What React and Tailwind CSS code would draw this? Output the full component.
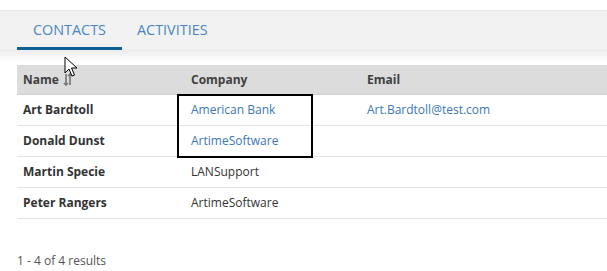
import React from "react";

const rows = [
  { name: "Art Bardtoll", company: "American Bank", email: "Art.Bardtoll@test.com", link: true },
  { name: "Donald Dunst", company: "ArtimeSoftware", email: "", link: true },
  { name: "Martin Specie", company: "LANSupport", email: "", link: false },
  { name: "Peter Rangers", company: "ArtimeSoftware", email: "", link: false },
];

function Cursor() {
  return (
    <svg
      className="absolute left-[64px] top-[56px]"
      width="14"
      height="22"
      viewBox="0 0 14 22"
    >
      <path
        d="M1 1 L1 17 L5 13 L8 20 L10.5 19 L7.5 12 L13 12 Z"
        fill="#ffffff"
        stroke="#000000"
        strokeWidth="1"
        strokeLinejoin="round"
      />
    </svg>
  );
}

function SortIcon() {
  return (
    <svg width="10" height="13" viewBox="0 0 10 13" className="ml-[4px]">
      <path d="M3 1 V12 M1 10 L3 12 L5 10" stroke="#7a7a7a" strokeWidth="1.7" fill="none" />
      <path d="M7 12 V1 M5 3 L7 1 L9 3" stroke="#7a7a7a" strokeWidth="1.7" fill="none" />
    </svg>
  );
}

export default function App() {
  return (
    <div
      className="relative w-[607px] h-[271px] bg-white overflow-hidden"
      style={{ fontFamily: '"Open Sans", "Noto Sans", sans-serif' }}
    >
      {/* tab bar */}
      <div className="pt-[10px]">
        <div className="h-[39px] bg-[#f2f2f2] border-t border-[#e8e8e8] flex pl-[17px]">
          <div className="relative px-[16px] flex items-center text-[14.4px] text-[#4a86c4]">
            CONTACTS
            <div className="absolute left-0 right-0 bottom-[-1px] h-[3px] bg-[#0f5f94]" />
          </div>
          <div className="px-[15px] flex items-center text-[14.4px] text-[#4a86c4]">
            ACTIVITIES
          </div>
        </div>
        <div className="h-[13px] bg-gradient-to-b from-[#ebebeb] to-white" />
      </div>

      {/* table */}
      <div className="ml-[17px] mt-[3px] text-[12px]">
        <div className="h-[30px] bg-[#dcdcdc] flex items-center font-bold text-[#404040] border-b border-[#d0d0d0]">
          <div className="w-[168px] pl-[6px] flex items-center">
            Name
            <SortIcon />
          </div>
          <div className="w-[176px] pl-[6px]">Company</div>
          <div className="pl-[6px]">Email</div>
        </div>
        {rows.map((r) => (
          <div key={r.name} className="h-[31px] flex items-center border-b border-[#e3e3e3]">
            <div className="w-[168px] pl-[6px] font-bold text-[#333333]">{r.name}</div>
            <div className={`w-[176px] pl-[6px] ${r.link ? "text-[#3a78b8]" : "text-[#333333]"}`}>
              {r.company}
            </div>
            <div className="pl-[6px] text-[#3a78b8]">{r.email}</div>
          </div>
        ))}
      </div>

      <div className="ml-[17px] mt-[33px] text-[12px] text-[#555555]">1 - 4 of 4 results</div>

      {/* annotation box */}
      <div className="absolute left-[177px] top-[94px] w-[136px] h-[64px] border-2 border-black" />

      <Cursor />
    </div>
  );
}
